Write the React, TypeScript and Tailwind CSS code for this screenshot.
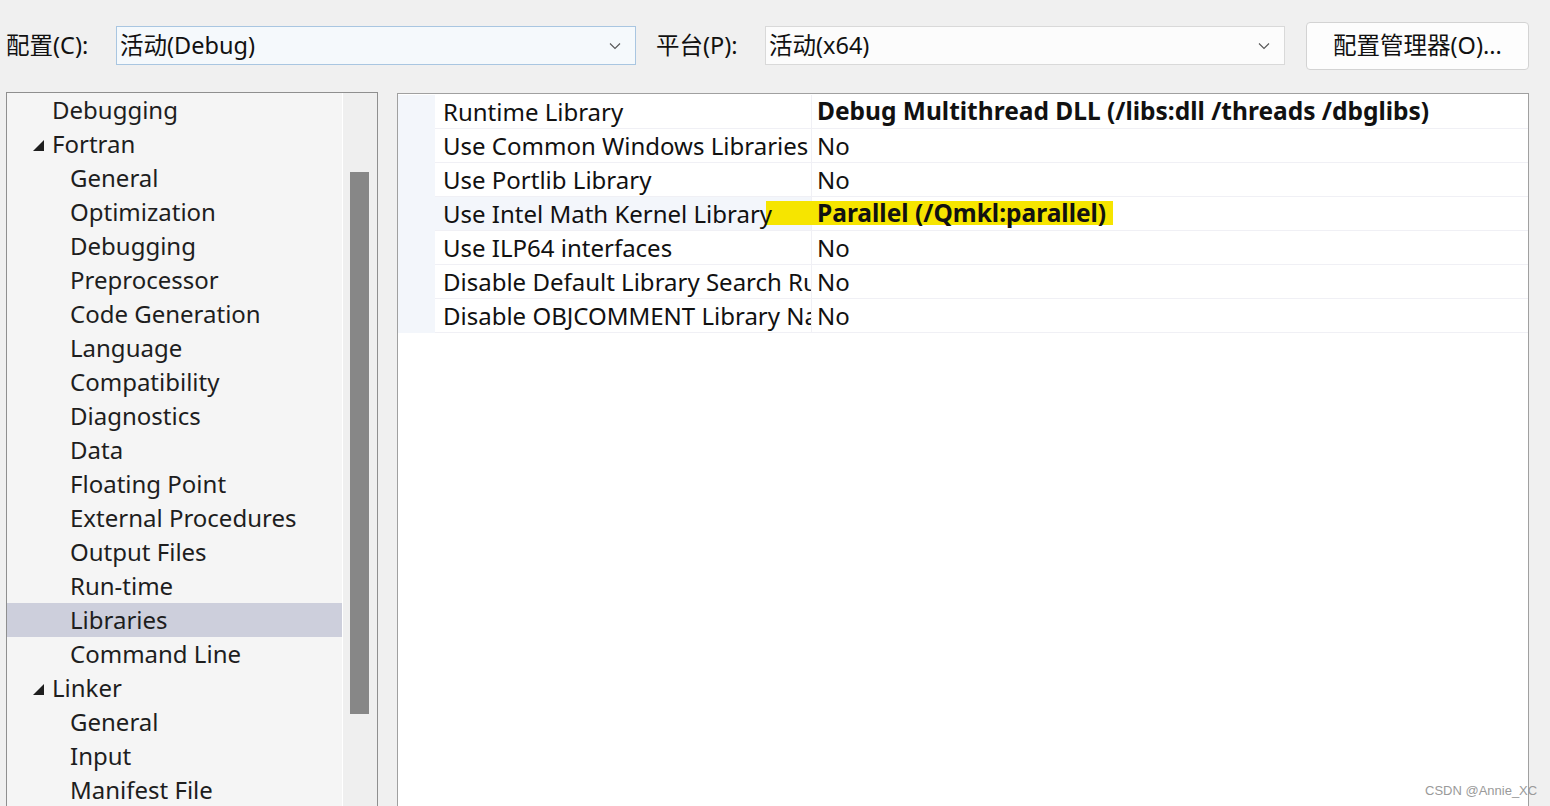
import React from "react";

const FONT = '"Noto Sans", "Noto Sans CJK SC", sans-serif';

type Item = { t: string; l: 1 | 2; exp?: boolean; sel?: boolean };

const tree: Item[] = [
  { t: "Debugging", l: 1 },
  { t: "Fortran", l: 1, exp: true },
  { t: "General", l: 2 },
  { t: "Optimization", l: 2 },
  { t: "Debugging", l: 2 },
  { t: "Preprocessor", l: 2 },
  { t: "Code Generation", l: 2 },
  { t: "Language", l: 2 },
  { t: "Compatibility", l: 2 },
  { t: "Diagnostics", l: 2 },
  { t: "Data", l: 2 },
  { t: "Floating Point", l: 2 },
  { t: "External Procedures", l: 2 },
  { t: "Output Files", l: 2 },
  { t: "Run-time", l: 2 },
  { t: "Libraries", l: 2, sel: true },
  { t: "Command Line", l: 2 },
  { t: "Linker", l: 1, exp: true },
  { t: "General", l: 2 },
  { t: "Input", l: 2 },
  { t: "Manifest File", l: 2 },
];

const props: { n: string; v: string; bold?: boolean; hl?: boolean }[] = [
  { n: "Runtime Library", v: "Debug Multithread DLL (/libs:dll /threads /dbglibs)", bold: true },
  { n: "Use Common Windows Libraries", v: "No" },
  { n: "Use Portlib Library", v: "No" },
  { n: "Use Intel Math Kernel Library", v: "Parallel (/Qmkl:parallel)", bold: true, hl: true },
  { n: "Use ILP64 interfaces", v: "No" },
  { n: "Disable Default Library Search Rules", v: "No" },
  { n: "Disable OBJCOMMENT Library Name in Object", v: "No" },
];

function Chevron() {
  return (
    <svg width="12" height="8" viewBox="0 0 12 8" className="shrink-0">
      <path d="M1 1.5 L6 6.5 L11 1.5" fill="none" stroke="#555" strokeWidth="1.1" />
    </svg>
  );
}

function Combo({ text, w, focused }: { text: string; w: string; focused?: boolean }) {
  return (
    <div
      className={`${w} h-[39px] flex items-center justify-between pl-[3px] pr-[14px] border ${
        focused ? "border-[#a9c6e1] bg-[#f5f9fc]" : "border-[#d9d9d9] bg-[#fcfcfc]"
      }`}
    >
      <span className="text-[23.5px] text-[#111] leading-none">{text}</span>
      <Chevron />
    </div>
  );
}

export default function App() {
  return (
    <div className="relative w-[1550px] h-[806px] overflow-hidden bg-[#f0f0f0]" style={{ fontFamily: FONT }}>
      {/* top bar */}
      <div className="h-[91px] flex items-center pl-[6px]">
        <span className="w-[110px] text-[23.5px] text-[#111] leading-none">配置(C):</span>
        <Combo text="活动(Debug)" w="w-[520px]" focused />
        <span className="ml-[20px] w-[109px] text-[23.5px] text-[#111] leading-none">平台(P):</span>
        <Combo text="活动(x64)" w="w-[520px]" />
        <div className="ml-[21px] w-[223px] h-[48px] flex items-center justify-center rounded-[4px] border border-[#d3d3d3] bg-[#fdfdfd] text-[23.5px] text-[#111] leading-none">
          配置管理器(O)...
        </div>
      </div>

      {/* body */}
      <div className="flex items-start pl-[6px] mt-[1px]">
        {/* tree panel */}
        <div className="w-[372px] h-[740px] border border-[#8f8f8f] bg-[#f5f5f5] flex">
          <div className="w-[335px] flex flex-col">
            {tree.map((it, i) => (
              <div
                key={i}
                className={`h-[34px] shrink-0 flex items-center relative ${it.sel ? "bg-[#cdcfdc]" : ""}`}
              >
                {it.exp && (
                  <svg width="11" height="11" viewBox="0 0 11 11" className="absolute left-[26px] top-[13px]">
                    <polygon points="11,0 11,11 0,11" fill="#1e1e1e" />
                  </svg>
                )}
                <span
                  className={`text-[24px] text-[#1e1e1e] leading-none whitespace-nowrap ${
                    it.l === 1 ? "pl-[45px]" : "pl-[63px]"
                  }`}
                >
                  {it.t}
                </span>
              </div>
            ))}
          </div>
          <div className="w-[1px] bg-white" />
          <div className="flex-1 bg-[#efefef] pt-[79px]">
            <div className="ml-[7px] w-[19px] h-[542px] bg-[#878787]" />
          </div>
        </div>

        {/* property grid */}
        <div className="ml-[19px] mt-[1px] w-[1132px] h-[740px] border border-[#a0a0a0] bg-white pt-[1px]">
          <div className="flex">
            <div className="w-[37px] h-[238px] bg-[#f3f6fb]" />
            <div className="flex-1 flex flex-col">
              {props.map((p, i) => (
                <div key={i} className="relative h-[34px] flex border-b border-[#f0f0f5]">
                  <div
                    className={`w-[377px] shrink-0 overflow-hidden border-r border-[#f0f0f5] flex items-center pl-[8px] ${
                      p.hl ? "bg-[#f3f6fb]" : ""
                    }`}
                  >
                    <span className="relative z-10 block w-full overflow-hidden text-[24px] text-[#111] leading-[34px] whitespace-nowrap">
                      {p.n}
                    </span>
                  </div>
                  {p.hl && <div className="absolute left-[331px] top-[4px] w-[347px] h-[24px] bg-[#f6e500]" />}
                  <div className="relative flex-1 flex items-center pl-[5px]">
                    <span
                      className={`relative text-[#111] leading-none whitespace-nowrap ${
                        p.bold ? "font-bold text-[24.5px]" : "text-[24px]"
                      }`}
                    >
                      {p.v}
                    </span>
                  </div>
                </div>
              ))}
            </div>
          </div>
        </div>
      </div>

      <div
        className="absolute left-[1425px] top-[781px] text-[13px] text-[#9a9a9a]"
        style={{ fontFamily: '"Liberation Sans", Arial, sans-serif' }}
      >
        CSDN @Annie_XC
      </div>
    </div>
  );
}
